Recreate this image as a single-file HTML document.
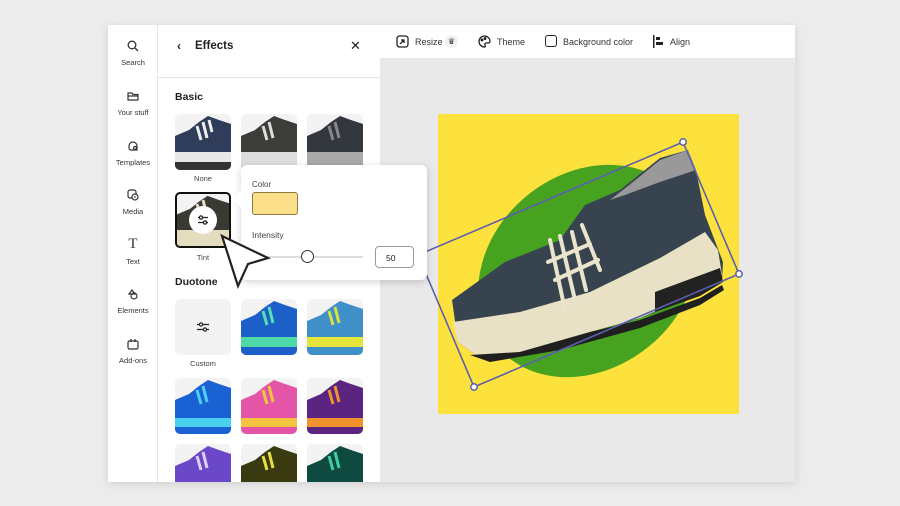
<!DOCTYPE html>
<html><head><style>
*{margin:0;padding:0;box-sizing:border-box}
body{width:900px;height:506px;background:#ececec;font-family:"Liberation Sans",sans-serif;position:relative;overflow:hidden;color:#222}
.abs{position:absolute}
.frame{left:108px;top:25px;width:687px;height:457px;background:#e9e9e9;box-shadow:0 2px 8px rgba(0,0,0,.12)}
.rail{left:108px;top:25px;width:50px;height:457px;background:#fff;border-right:1px solid #e6e6e6}
.ri{position:absolute;left:0;width:50px;text-align:center;font-size:7.5px;color:#333}
.ri svg{display:block;margin:0 auto 6px}
.panel{left:158px;top:25px;width:222px;height:457px;background:#fff;overflow:hidden}
.tb{left:380px;top:25px;width:415px;height:33px;background:#fff;font-size:9px;color:#333}
.tile{position:absolute;width:56px;height:56px;border-radius:5px;background:#f3f3f3;overflow:hidden}
.lbl{position:absolute;font-size:7.5px;color:#444;text-align:center;width:56px}
h3{position:absolute;font-size:10.5px;font-weight:bold;color:#222}
</style></head><body>
<svg width="0" height="0" style="position:absolute"><defs>
<symbol id="sh" viewBox="0 0 56 56"><path d="M0 22 L14 16 L24 8 L33 2 L44 6 L56 10 L56 56 L0 56Z"/></symbol>
</defs></svg>
<div class="abs frame"></div>
<div class="abs rail">
 <div class="ri" style="top:15px"><svg width="12" height="12" viewBox="0 0 12 12" fill="none" stroke="#333" stroke-width="1.3"><circle cx="5" cy="5" r="3.8"/><path d="M8 8l3 3"/></svg>Search</div>
 <div class="ri" style="top:65px"><svg width="12" height="12" viewBox="0 0 12 12" fill="none" stroke="#333" stroke-width="1.2"><path d="M1 3h4l1 1.5h5V10H1z M1 6h10"/></svg>Your stuff</div>
 <div class="ri" style="top:115px"><svg width="12" height="12" viewBox="0 0 12 12" fill="none" stroke="#333" stroke-width="1.2"><path d="M2 6a4 4 0 1 1 8 0v4H4a2 2 0 0 1-2-2z"/><circle cx="8" cy="8" r="1.5"/></svg>Templates</div>
 <div class="ri" style="top:164px"><svg width="12" height="12" viewBox="0 0 12 12" fill="none" stroke="#333" stroke-width="1.2"><rect x="1" y="1" width="8" height="8" rx="2"/><circle cx="8" cy="8" r="3" fill="#fff"/><path d="M7.3 6.8v2.4l1.8-1.2z" fill="#333" stroke="none"/></svg>Media</div>
 <div class="ri" style="top:212px"><div style="font-family:'Liberation Serif',serif;font-size:15px;line-height:15px;margin-bottom:5px">T</div>Text</div>
 <div class="ri" style="top:263px"><svg width="12" height="12" viewBox="0 0 12 12" fill="none" stroke="#333" stroke-width="1.2"><path d="M2 6l3-4 3 4z"/><circle cx="7" cy="8" r="3"/></svg>Elements</div>
 <div class="ri" style="top:313px"><svg width="12" height="12" viewBox="0 0 12 12" fill="none" stroke="#333" stroke-width="1.2"><rect x="1" y="3" width="10" height="8" rx="1.5"/><path d="M4 1v3M8 1v3"/></svg>Add-ons</div>
</div>
<div class="abs panel">
 <div class="abs" style="left:19px;top:14px;font-size:12px;font-weight:bold">‹</div>
 <div class="abs" style="left:37px;top:15px;font-size:11.5px;font-weight:bold">Effects</div>
 <div class="abs" style="left:192px;top:13px;font-size:13px">✕</div>
 <div class="abs" style="left:0;top:52px;width:222px;height:1px;background:#e3e3e3"></div>
 <h3 style="left:17px;top:66px">Basic</h3>
 <div class="tile" style="left:17px;top:89px"><svg width="56" height="56"><use href="#sh" fill="#2f3d5a"/><rect y="38" width="56" height="18" fill="#e8e8e8"/><rect y="48" width="56" height="8" fill="#333"/><path d="M22 12l4 14M28 8l4 16M34 6l3 12" stroke="#eee" stroke-width="3"/></svg></div>
 <div class="lbl" style="left:17px;top:149px">None</div>
 <div class="tile" style="left:83px;top:89px"><svg width="56" height="56"><use href="#sh" fill="#3c3c38"/><rect y="38" width="56" height="18" fill="#ddd"/><path d="M22 12l4 14M28 8l4 16" stroke="#ddd" stroke-width="3"/></svg></div>
 <div class="tile" style="left:149px;top:89px"><svg width="56" height="56"><use href="#sh" fill="#33383f"/><rect y="38" width="56" height="18" fill="#aaa"/><path d="M22 12l4 14M28 8l4 16" stroke="#888" stroke-width="3"/></svg></div>
 <div class="tile" style="left:17px;top:167px;border:2px solid #111;border-radius:5px"><svg width="52" height="52"><use href="#sh" fill="#3b3a32"/><rect y="36" width="56" height="18" fill="#e4dcbe"/><path d="M20 10l4 14M26 6l4 16" stroke="#e8e0c4" stroke-width="3"/></svg>
  <div class="abs" style="left:12px;top:12px;width:28px;height:28px;border-radius:50%;background:#fff"><svg width="28" height="28" viewBox="0 0 28 28" stroke="#222" stroke-width="1.3" fill="#fff"><path d="M9 11.5h10M9 16.5h10"/><circle cx="12" cy="11.5" r="1.6"/><circle cx="16" cy="16.5" r="1.6"/></svg></div></div>
 <div class="lbl" style="left:17px;top:228px">Tint</div>
 <h3 style="left:17px;top:251px">Duotone</h3>
 <div class="tile" style="left:17px;top:274px"><svg width="56" height="56" viewBox="0 0 56 56" stroke="#222" stroke-width="1.2" fill="#f3f3f3"><path d="M22 25.5h12M22 30.5h12"/><circle cx="26" cy="25.5" r="1.6"/><circle cx="30" cy="30.5" r="1.6"/></svg></div>
 <div class="lbl" style="left:17px;top:334px">Custom</div>
 <div class="tile" style="left:83px;top:274px"><svg width="56" height="56"><use href="#sh" fill="#1d5fc9"/><rect y="38" width="56" height="10" fill="#4fd8a8"/><path d="M22 12l4 14M28 8l4 16" stroke="#55e0b0" stroke-width="3"/></svg></div>
 <div class="tile" style="left:149px;top:274px"><svg width="56" height="56"><use href="#sh" fill="#3f8fc8"/><rect y="38" width="56" height="10" fill="#e4e43a"/><path d="M22 12l4 14M28 8l4 16" stroke="#d8e040" stroke-width="3"/></svg></div>
 <div class="tile" style="left:17px;top:353px"><svg width="56" height="56"><use href="#sh" fill="#1a62d4"/><rect y="40" width="56" height="9" fill="#4cd0f0"/><path d="M22 12l4 14M28 8l4 16" stroke="#50d0f0" stroke-width="3"/></svg></div>
 <div class="tile" style="left:83px;top:353px"><svg width="56" height="56"><use href="#sh" fill="#e455a8"/><rect y="40" width="56" height="9" fill="#f2c440"/><path d="M22 12l4 14M28 8l4 16" stroke="#f2c440" stroke-width="3"/></svg></div>
 <div class="tile" style="left:149px;top:353px"><svg width="56" height="56"><use href="#sh" fill="#5a2480"/><rect y="40" width="56" height="9" fill="#f0922e"/><path d="M22 12l4 14M28 8l4 16" stroke="#f0922e" stroke-width="3"/></svg></div>
 <div class="tile" style="left:17px;top:419px"><svg width="56" height="56"><use href="#sh" fill="#6a48c8"/><path d="M22 12l4 14M28 8l4 16" stroke="#e0d0f0" stroke-width="3"/></svg></div>
 <div class="tile" style="left:83px;top:419px"><svg width="56" height="56"><use href="#sh" fill="#3a3a10"/><path d="M22 12l4 14M28 8l4 16" stroke="#e8e040" stroke-width="3"/></svg></div>
 <div class="tile" style="left:149px;top:419px"><svg width="56" height="56"><use href="#sh" fill="#0e4a40"/><path d="M22 12l4 14M28 8l4 16" stroke="#40d0a0" stroke-width="3"/></svg></div>
</div>
<div class="abs tb">
 <svg class="abs" style="left:16px;top:10px" width="13" height="13" viewBox="0 0 13 13" fill="none" stroke="#222" stroke-width="1.3"><rect x="1" y="1" width="11" height="11" rx="2.5"/><path d="M4 9l4-4M5 5h3v3"/></svg>
 <span class="abs" style="left:35px;top:12px">Resize</span>
 <div class="abs" style="left:65px;top:10px;width:13px;height:13px;border-radius:50%;background:#f1f1f1;font-size:8px;text-align:center;line-height:13px">♛</div>
 <svg class="abs" style="left:98px;top:10px" width="13" height="13" viewBox="0 0 13 13" fill="none" stroke="#222" stroke-width="1.3"><path d="M6.5 1a5.5 5.5 0 1 0 0 11c1 0 1-1 .5-2s0-2 1.5-2h2A2 2 0 0 0 12 6 5.5 5.5 0 0 0 6.5 1z"/><circle cx="4" cy="5" r=".8" fill="#222"/><circle cx="7" cy="3.5" r=".8" fill="#222"/></svg>
 <span class="abs" style="left:117px;top:12px">Theme</span>
 <div class="abs" style="left:165px;top:10px;width:12px;height:12px;border:1.4px solid #222;border-radius:3px"></div>
 <span class="abs" style="left:183px;top:12px">Background color</span>
 <svg class="abs" style="left:272px;top:10px" width="13" height="13" viewBox="0 0 13 13"><rect x="1" y="0" width="1.5" height="13" fill="#222"/><rect x="4" y="2" width="4" height="3" fill="#222"/><rect x="4" y="7" width="7" height="3" fill="#222"/></svg>
 <span class="abs" style="left:290px;top:12px">Align</span>
</div>
<svg class="abs" style="left:0;top:0" width="900" height="506">
 <rect x="438" y="114" width="301" height="300" fill="#fde23d"/>
 <ellipse cx="588" cy="271" rx="118" ry="97" transform="rotate(-40 588 271)" fill="#47a21f"/>
 <path d="M452 300 L505 262 L560 240 L585 205 L620 190 L660 158 L688 150 L696 170 L705 215 L723 262 L722 282 L700 295 L640 318 L590 332 L520 352 L480 358 L458 342 Z" fill="#37444f"/>
 <path d="M688 150 L696 170 L660 182 L625 195 L610 200 L628 186 L660 160Z" fill="#999"/>
 <path d="M453 322 L520 312 L590 292 L660 258 L705 232 L718 250 L722 275 L700 292 L640 318 L590 332 L520 352 L480 358 L458 342Z" fill="#e8e1c5"/>
 <path d="M655 292 L720 268 L723 282 L700 296 L655 312Z" fill="#222"/>
 <path d="M470 355 L520 352 L590 332 L640 320 L700 298 L722 285 L724 290 L700 305 L640 328 L560 350 L490 362Z" fill="#1f1f1f"/>
 <path d="M550 240 L565 310 M560 236 L575 300 M572 232 L586 290 M582 225 L600 270 M548 262 L590 244 M555 280 L598 260" stroke="#ebe4cc" stroke-width="4" fill="none" stroke-linecap="round"/>
 <polygon points="683,142 739,274 474,387 418,255" fill="none" stroke="#5b5fae" stroke-width="1.6"/>
 <g fill="#fff" stroke="#5b5fae" stroke-width="1.5"><circle cx="683" cy="142" r="3.2"/><circle cx="739" cy="274" r="3.2"/><circle cx="474" cy="387" r="3.2"/></g>
</svg>
<div class="abs" style="left:241px;top:165px;width:186px;height:115px;background:#fff;border-radius:6px;box-shadow:0 2px 8px rgba(0,0,0,.18)">
 <div class="abs" style="left:-6px;top:28px;width:12px;height:12px;background:#fff;transform:rotate(45deg)"></div>
 <div class="abs" style="left:11px;top:15px;font-size:8px;color:#444">Color</div>
 <div class="abs" style="left:11px;top:27px;width:46px;height:23px;background:#fcdf8a;border:1px solid #8a7a40;border-radius:3px"></div>
 <div class="abs" style="left:11px;top:65px;font-size:8.5px;color:#444">Intensity</div>
 <div class="abs" style="left:25px;top:91px;width:97px;height:2px;background:#ddd"></div>
 <div class="abs" style="left:60px;top:85px;width:13px;height:13px;border-radius:50%;background:#fff;border:1.5px solid #333"></div>
 <div class="abs" style="left:134px;top:81px;width:39px;height:22px;border:1px solid #999;border-radius:4px;font-size:8.5px;padding:6px 0 0 10px">50</div>
</div>
<svg class="abs" style="left:0;top:0" width="900" height="506"><path d="M222 236 L268 258 L248 264 L238 286 Z" fill="#fff" stroke="#222" stroke-width="2.2" stroke-linejoin="miter"/></svg>
</body></html>
